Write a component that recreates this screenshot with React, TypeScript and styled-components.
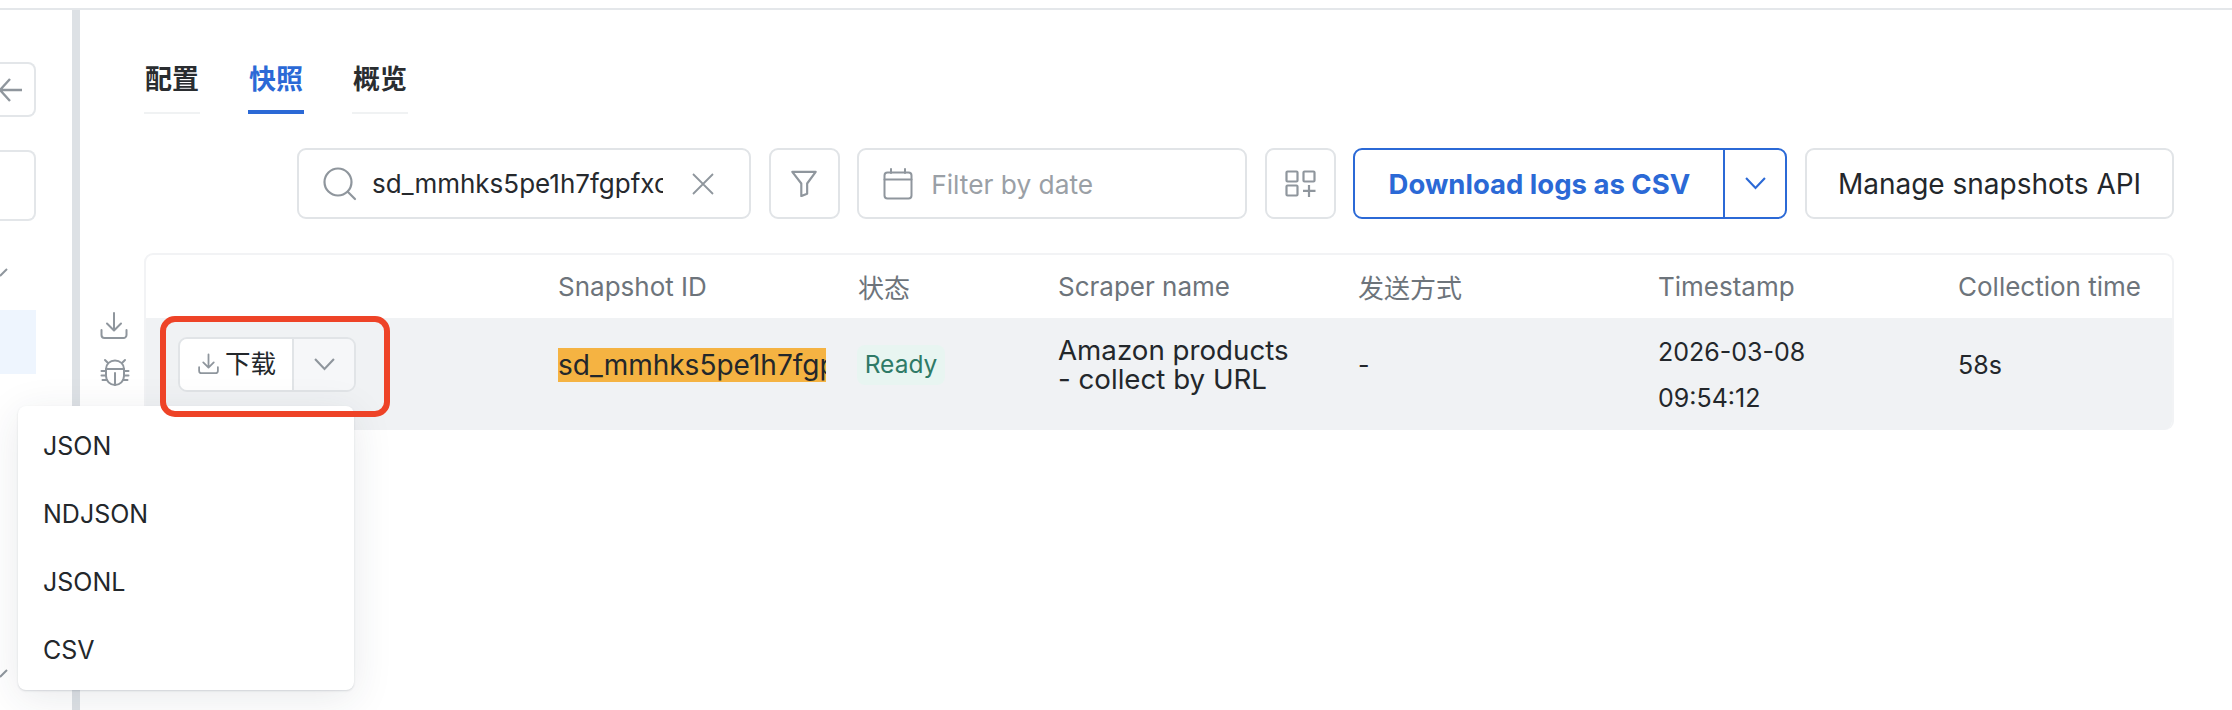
import styled, { createGlobalStyle } from 'styled-components';

const FONT = `Inter, "Noto Sans CJK SC", sans-serif`;

const GlobalStyle = createGlobalStyle`
  html, body {
    margin: 0;
    padding: 0;
    background: #fff;
    overflow: hidden;
  }
  * {
    box-sizing: border-box;
  }
`;

const Page = styled.div`
  position: relative;
  width: 2232px;
  height: 710px;
  padding-top: 8px;
  font-family: ${FONT};
  color: #23272b;
  overflow: hidden;
`;
const TopLine = styled.div`
  height: 2px;
  background: #e4e7ea;
`;
const Body = styled.div`
  display: flex;
  height: 700px;
`;
const Sidebar = styled.aside`
  width: 72px;
  padding-top: 52px;
  display: flex;
  flex-direction: column;
  overflow: hidden;
`;
const SideBox = styled.div<{ $h: number; $mb: number }>`
  width: 37px;
  height: ${(p) => p.$h}px;
  margin-bottom: ${(p) => p.$mb}px;
  margin-left: -1px;
  flex: none;
  border: 2px solid #e3e6e9;
  border-left: none;
  border-radius: 0 8px 8px 0;
  background: #fff;
  display: flex;
  align-items: center;
`;
const BackIcon = styled.svg`
  width: 24px;
  height: 26px;
  flex: none;
`;
const SideChevron = styled.svg<{ $mb: number }>`
  width: 8px;
  height: 10px;
  flex: none;
  margin-bottom: ${(p) => p.$mb}px;
`;
const SideSelected = styled.div`
  width: 36px;
  height: 64px;
  flex: none;
  margin-bottom: 294px;
  background: #eef5fe;
`;
const Divider = styled.div`
  width: 8px;
  background: #dde1e5;
`;
const Main = styled.main`
  flex: 1;
  padding: 50px 58px 0 20px;
  display: flex;
  flex-direction: column;
`;
const Tabs = styled.div`
  display: flex;
  gap: 48px;
  margin-left: 44px;
`;
const Tab = styled.div<{ $active?: boolean }>`
  width: 56px;
  height: 54px;
  text-align: center;
  font-size: 27px;
  line-height: 40px;
  font-weight: 700;
  color: ${(p) => (p.$active ? '#2b69d6' : '#2a2d30')};
  border-bottom: ${(p) => (p.$active ? '4px solid #2b69d6' : '2px solid #f0f2f3')};
`;
const Toolbar = styled.div`
  display: flex;
  justify-content: flex-end;
  gap: 17.6px;
  margin-top: 34px;
  height: 71px;
`;
const Field = styled.div<{ $w: number }>`
  width: ${(p) => p.$w}px;
  border: 2px solid #e1e4e7;
  border-radius: 9px;
  display: flex;
  align-items: center;
  background: #fff;
`;
const SearchIcon = styled.svg`
  width: 34px;
  height: 34px;
  margin-left: 24px;
  flex: none;
`;
const SearchValue = styled.div`
  width: 291px;
  margin-left: 15px;
  font-size: 26px;
  line-height: 36px;
  padding-top: 1px;
  white-space: nowrap;
  overflow: hidden;
  color: #26292d;
`;
const ClearIcon = styled.svg`
  width: 22px;
  height: 22px;
  margin-left: 29px;
  flex: none;
`;
const IconBtn = styled.div<{ $w: number }>`
  width: ${(p) => p.$w}px;
  border: 2px solid #e1e4e7;
  border-radius: 9px;
  display: flex;
  align-items: center;
  justify-content: center;
  background: #fff;
`;
const DateIcon = styled.svg`
  width: 30px;
  height: 32px;
  margin-left: 24px;
  flex: none;
`;
const Placeholder = styled.div`
  margin-left: 18px;
  padding-top: 2px;
  font-size: 26.300px;
  color: #9aa0a6;
`;
const SplitPrimary = styled.div`
  width: 434px;
  border: 2px solid #2b69d6;
  border-radius: 9px;
  display: flex;
  color: #2b69d6;
`;
const SplitLabel = styled.div`
  flex: 1;
  border-right: 2px solid #2b69d6;
  display: flex;
  align-items: center;
  justify-content: center;
  font-size: 27.500px;
  font-weight: 700;
`;
const SplitArrow = styled.div`
  width: 60px;
  display: flex;
  align-items: center;
  justify-content: center;
`;
const PlainBtn = styled.div`
  width: 369px;
  border: 2px solid #e1e4e7;
  border-radius: 9px;
  display: flex;
  align-items: center;
  justify-content: center;
  font-size: 28px;
  color: #23272b;
`;
const Content = styled.div`
  position: relative;
  display: flex;
  margin-top: 34px;
`;
const RowIcons = styled.div`
  width: 44px;
  padding-top: 58px;
  display: flex;
  flex-direction: column;
  gap: 18px;
`;
const Table = styled.div`
  width: 2030px;
  height: 177px;
  border: 2px solid #f2f3f5;
  border-bottom: none;
  border-radius: 9px;
  overflow: hidden;
`;
const Columns = styled.div`
  display: grid;
  grid-template-columns: 412px 300px 200px 300px 300px 300px 1fr;
  align-items: center;
`;
const HeaderRow = styled(Columns)`
  height: 63px;
  font-size: 26px;
  color: #6d747b;
`;
const DataRow = styled(Columns)`
  height: 112px;
  background: #f0f2f4;
  font-size: 25px;
  color: #23272b;
`;
const Highlight = styled.div`
  width: 268px;
  height: 34px;
  margin-bottom: 18px;
  font-size: 28px;
  line-height: 35px;
  background: #f5b342;
  white-space: nowrap;
  overflow: hidden;
`;
const Pill = styled.div`
  width: 88px;
  height: 40px;
  margin: 0 0 18px -1px;
  border-radius: 8px;
  background: #e8f5f1;
  color: #2f7a67;
  font-size: 24.500px;
  line-height: 38px;
  text-align: center;
`;
const NameCell = styled.div`
  line-height: 29px;
  font-size: 27.700px;
  margin-top: -19px;
`;
const PlainCell = styled.span`
  margin-bottom: 18px;
`;
const TimeCell = styled.div`
  line-height: 46px;
  margin-top: 2px;
`;
const Annotation = styled.div`
  position: absolute;
  left: 160px;
  top: 316px;
  width: 230px;
  height: 101px;
  border: 6px solid #ee4327;
  border-radius: 15px;
  z-index: 3;
`;
const RowActions = styled.div`
  position: absolute;
  left: 178px;
  top: 337px;
  width: 178px;
  height: 55px;
  display: flex;
  border: 2px solid #e1e4e7;
  border-radius: 9px;
  overflow: hidden;
  z-index: 1;
`;
const ActionMain = styled.div`
  width: 114px;
  display: flex;
  align-items: center;
  gap: 6px;
  padding-left: 18px;
  background: #fff;
  border-right: 2px solid #e1e4e7;
  font-size: 25.500px;
  line-height: 30px;
  padding-bottom: 2px;
`;
const ActionArrow = styled.div`
  flex: 1;
  display: flex;
  align-items: center;
  justify-content: center;
  background: #f6f7f9;
`;
const Menu = styled.div`
  position: absolute;
  left: 18px;
  top: 406px;
  width: 336px;
  height: 284px;
  padding-top: 6px;
  background: #fff;
  border-radius: 8px;
  box-shadow: 0 1px 2px rgba(40, 50, 70, 0.16), 0 8px 40px rgba(40, 50, 70, 0.1);
  z-index: 2;
`;
const MenuItem = styled.div`
  height: 68px;
  padding-left: 25px;
  line-height: 68px;
  font-size: 25px;
  color: #23272b;
`;

const Chevron = ({ w, color }: { w: number; color: string }) => (
  <svg width={w} height={w * 0.6} viewBox="0 0 20 12" fill="none" stroke={color} strokeWidth="2">
    <path d="M1 1l9 9.5L19 1" />
  </svg>
);

const DownloadIcon = ({ size, color, sw }: { size: number; color: string; sw: number }) => (
  <svg width={size} height={size} viewBox="0 0 28 28" fill="none" stroke={color} strokeWidth={sw} strokeLinecap="round" strokeLinejoin="round">
    <path d="M14 2v17M7 12.5l7 7 7-7" />
    <path d="M1.500 19v5a3 3 0 0 0 3 3h19a3 3 0 0 0 3-3v-5" />
  </svg>
);

const BugIcon = () => (
  <svg width="30" height="30" viewBox="0 0 30 30" fill="none" stroke="#8f969d" strokeWidth="2" strokeLinecap="round">
    <path d="M6 12c0-5 4-8.500 9-8.500s9 3.500 9 8.500v7c0 5-4 9-9 9s-9-4-9-9z" />
    <path d="M6 12h18M15 16v12M5 3l3 3M25 3l-3 3M1.500 14H6M1.500 18.500H6M2.500 23H7M24 14h4.500M24 18.500h4.500M23 23h4.500" />
  </svg>
);

export default function App() {
  return (
    <>
      <GlobalStyle />
      <Page>
        <TopLine />
        <Body>
          <Sidebar>
            <SideBox $h={55} $mb={33}>
              <BackIcon viewBox="0 0 24 26" fill="none" stroke="#8f969d" strokeWidth="2.400">
                <path d="M23 13H1M11 2L1 13l10 11" />
              </BackIcon>
            </SideBox>
            <SideBox $h={71} $mb={46} />
            <SideChevron $mb={33} viewBox="0 0 8 10" fill="none" stroke="#8f969d" strokeWidth="2">
              <path d="M0 9l7-7" />
            </SideChevron>
            <SideSelected />
            <SideChevron $mb={0} viewBox="0 0 8 10" fill="none" stroke="#8f969d" strokeWidth="2">
              <path d="M0 9l7-7" />
            </SideChevron>
          </Sidebar>
          <Divider />
          <Main>
            <Tabs>
              <Tab>配置</Tab>
              <Tab $active>快照</Tab>
              <Tab>概览</Tab>
            </Tabs>
            <Toolbar>
              <Field $w={454}>
                <SearchIcon viewBox="0 0 34 34" fill="none" stroke="#8f969d" strokeWidth="2.200" strokeLinecap="round">
                  <circle cx="15" cy="15" r="13.500" />
                  <path d="M25 25l7 7" />
                </SearchIcon>
                <SearchValue>sd_mmhks5pe1h7fgpfxc2</SearchValue>
                <ClearIcon viewBox="0 0 22 22" fill="none" stroke="#8f969d" strokeWidth="1.800">
                  <path d="M1 1l20 20M21 1L1 21" />
                </ClearIcon>
              </Field>
              <IconBtn $w={71}>
                <svg width="28" height="27" viewBox="0 0 30 30" fill="none" stroke="#8f969d" strokeWidth="2.400" strokeLinejoin="round">
                  <path d="M2 2h26L18.500 15v11.500L12 29V15z" />
                </svg>
              </IconBtn>
              <Field $w={390}>
                <DateIcon viewBox="0 0 30 32" fill="none" stroke="#8f969d" strokeWidth="2" strokeLinecap="round">
                  <rect x="1.500" y="4.500" width="27" height="26" rx="3" />
                  <path d="M1.500 11.500h27M8 1v4M22 1v4" />
                </DateIcon>
                <Placeholder>Filter by date</Placeholder>
              </Field>
              <IconBtn $w={71}>
                <svg width="31" height="27" viewBox="0 0 31 27" fill="none" stroke="#8f969d" strokeWidth="2.200">
                  <rect x="1.500" y="1.500" width="11" height="10" rx="1" />
                  <rect x="18.500" y="1.500" width="11" height="10" rx="1" />
                  <rect x="1.500" y="15.500" width="11" height="10" rx="1" />
                  <path d="M24 15v12M18 20.800h12.500" />
                </svg>
              </IconBtn>
              <SplitPrimary>
                <SplitLabel>Download logs as CSV</SplitLabel>
                <SplitArrow>
                  <Chevron w={21} color="#2b69d6" />
                </SplitArrow>
              </SplitPrimary>
              <PlainBtn>Manage snapshots API</PlainBtn>
            </Toolbar>
            <Content>
              <RowIcons>
                <DownloadIcon size={28} color="#8f969d" sw={2} />
                <BugIcon />
              </RowIcons>
              <Table>
                <HeaderRow>
                  <span />
                  <span>Snapshot ID</span>
                  <span>状态</span>
                  <span>Scraper name</span>
                  <span>发送方式</span>
                  <span>Timestamp</span>
                  <span>Collection time</span>
                </HeaderRow>
                <DataRow>
                  <span />
                  <Highlight>sd_mmhks5pe1h7fgpfxc2</Highlight>
                  <Pill>Ready</Pill>
                  <NameCell>
                    Amazon products
                    <br />- collect by URL
                  </NameCell>
                  <PlainCell>-</PlainCell>
                  <TimeCell>
                    2026-03-08
                    <br />
                    09:54:12
                  </TimeCell>
                  <PlainCell>58s</PlainCell>
                </DataRow>
              </Table>
            </Content>
          </Main>
        </Body>
        <RowActions>
          <ActionMain>
            <DownloadIcon size={21} color="#8f969d" sw={2.400} />
            下载
          </ActionMain>
          <ActionArrow>
            <Chevron w={21} color="#8f969d" />
          </ActionArrow>
        </RowActions>
        <Menu>
          <MenuItem>JSON</MenuItem>
          <MenuItem>NDJSON</MenuItem>
          <MenuItem>JSONL</MenuItem>
          <MenuItem>CSV</MenuItem>
        </Menu>
        <Annotation />
      </Page>
    </>
  );
}
